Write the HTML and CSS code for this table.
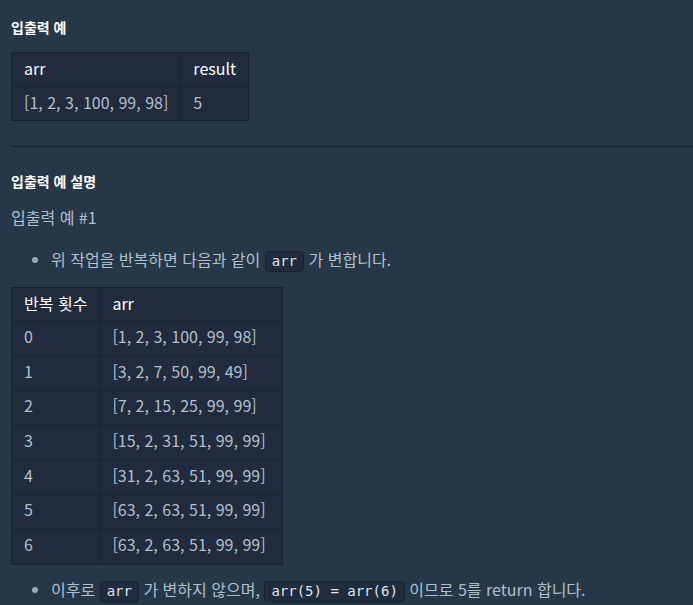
FILE: index.html
```html
<!DOCTYPE html>
<html lang="ko">
<head>
<meta charset="utf-8">
<link rel="stylesheet" href="styles.css">
</head>
<body>
<div class="content">
  <h5 class="title first">입출력 예</h5>
  <table class="tbl tbl-io">
    <thead><tr><th>arr</th><th>result</th></tr></thead>
    <tbody><tr><td>[1, 2, 3, 100, 99, 98]</td><td>5</td></tr></tbody>
  </table>
  <hr class="sep">
  <h5 class="title second">입출력 예 설명</h5>
  <p class="para">입출력 예 #1</p>
  <ul class="list list-top">
    <li>위 작업을 반복하면 다음과 같이 <code>arr</code> 가 변합니다.</li>
  </ul>
  <table class="tbl tbl-steps">
    <thead><tr><th>반복 횟수</th><th>arr</th></tr></thead>
    <tbody>
      <tr><td>0</td><td>[1, 2, 3, 100, 99, 98]</td></tr>
      <tr><td>1</td><td>[3, 2, 7, 50, 99, 49]</td></tr>
      <tr><td>2</td><td>[7, 2, 15, 25, 99, 99]</td></tr>
      <tr><td>3</td><td>[15, 2, 31, 51, 99, 99]</td></tr>
      <tr><td>4</td><td>[31, 2, 63, 51, 99, 99]</td></tr>
      <tr><td>5</td><td>[63, 2, 63, 51, 99, 99]</td></tr>
      <tr><td>6</td><td>[63, 2, 63, 51, 99, 99]</td></tr>
    </tbody>
  </table>
  <ul class="list list-bottom">
    <li>이후로 <code>arr</code> 가 변하지 않으며, <code>arr(5) = arr(6)</code> 이므로 5를 return 합니다.</li>
  </ul>
</div>
</body>
</html>
```

FILE: styles.css
```css
html, body {
  margin: 0;
  padding: 0;
  background: #263747;
  height: 100%;
  overflow: hidden;
}
body {
  font-family: "Noto Sans CJK KR", "Noto Sans", sans-serif;
  color: #b2c0cc;
  font-size: 16px;
}
.content {
  padding: 0 0 0 11px;
}
.title {
  margin: 0;
  font-size: 14px;
  line-height: 20px;
  font-weight: 700;
  color: #ffffff;
}
.title.first { padding-top: 17px; }
.title.second { margin-top: 24px; }
.tbl {
  border-collapse: collapse;
  background: #202b3d;
  margin-top: 15px;
}
.tbl th, .tbl td {
  border: 1px solid #172334;
  padding: 3px 12px 6px 12px;
  line-height: 24px;
  text-align: left;
  white-space: nowrap;
}
.tbl th {
  color: #ffffff;
  font-weight: 400;
}
.tbl td {
  color: #b2c0cc;
}
.tbl-steps tbody td {
  padding-top: 3px;
  padding-bottom: 7px;
  line-height: 23.65px;
}
.tbl-steps th:last-child,
.tbl-steps td:last-child {
  padding-right: 16px;
}
.sep {
  margin: 25px 0 0 0;
  border: 0;
  border-top: 1px solid #172334;
  height: 0;
}
.para {
  margin: 14px 0 0 0;
  line-height: 24px;
}
.list {
  margin: 0;
  padding-left: 40px;
  line-height: 24px;
}
.list li::marker { color: #98a8b9; }
.list-top { margin-top: 18px; }
.tbl-steps { margin-top: 14px; }
.list-bottom { margin-top: 12px; }
code {
  font-family: "DejaVu Sans Mono", monospace;
  font-size: 14px;
  background: #202b3d;
  border: 1px solid #172334;
  border-radius: 4px;
  padding: 1px 6px 2px;
  color: #dfe6ee;
}
```
